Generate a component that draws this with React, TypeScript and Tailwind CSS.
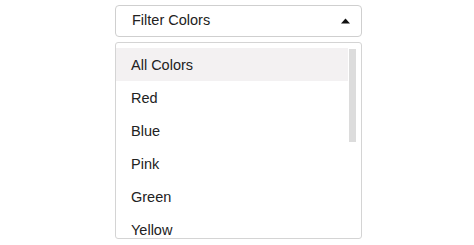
import React from 'react';

const colors = ['All Colors', 'Red', 'Blue', 'Pink', 'Green', 'Yellow'];

export default function App() {
    return (
        <div className="w-[474px] h-[245px] bg-white overflow-hidden font-['Liberation_Sans',Arial,sans-serif] text-[14.5px] text-[#222]">
            <div className="ml-[115px] mt-[5px] w-[247px]">
                {/* Toggle */}
                <div className="h-[32px] flex items-center justify-between pl-[16px] pr-[11px] border border-[#cfcfcf] rounded-[4px]">
                    <span>Filter Colors</span>
                    <svg width="9" height="6" viewBox="0 0 9 6">
                        <path d="M0 5.5 L4.5 0.5 L9 5.5 Z" fill="#111" />
                    </svg>
                </div>

                {/* Menu */}
                <div className="mt-[5px] h-[197px] pb-[3px] border border-[#d4d4d4] rounded-[3px] flex">
                    <div className="flex-1 pt-[5px] overflow-hidden">
                        {colors.map((c, i) => (
                            <div
                                key={c}
                                className={`h-[33px] flex items-center pl-[15px] pt-[2px] ${i === 0 ? 'bg-[#f3f1f2]' : ''}`}
                            >
                                {c}
                            </div>
                        ))}
                    </div>
                    <div className="pt-[6px] pl-[1px] pr-[5px]">
                        <div className="w-[7px] h-[93px] bg-[#dcdcdc]" />
                    </div>
                </div>
            </div>
        </div>
    );
}
